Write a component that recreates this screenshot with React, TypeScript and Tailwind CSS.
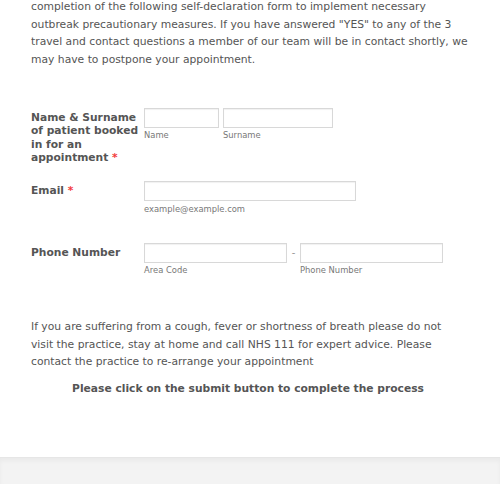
import React from "react";

const font = { fontFamily: '"DejaVu Sans", Verdana, sans-serif' };

function Input({ w }: { w: string }) {
  return (
    <div
      className={`${w} h-[20px] border border-[#d8d8d8] bg-white shadow-[inset_0_1px_1px_rgba(0,0,0,0.06)]`}
    />
  );
}

export default function App() {
  return (
    <div className="w-[500px] h-[484px] bg-white overflow-hidden flex flex-col" style={font}>
      <div className="flex-1 pl-[31px] pr-[24px]">
        <p className="-mt-[2px] text-[10.75px] leading-[17.5px] text-[#555]">
          completion of the following self-declaration form to implement necessary outbreak
          precautionary measures. If you have answered "YES" to any of the 3 travel and contact
          questions a member of our team will be in contact shortly, we may have to postpone your
          appointment.
        </p>

        <div className="mt-[40px] flex">
          <div className="w-[113px] shrink-0 pt-[3px] text-[10.7px] leading-[13.3px] font-bold text-[#555]">
            Name &amp; Surname of patient booked in for an appointment{" "}
            <span className="text-[#f23a3c]">*</span>
          </div>
          <div className="flex gap-[4px]">
            <div className="flex flex-col">
              <Input w="w-[75px]" />
              <span className="mt-[1px] text-[8.4px] leading-[12px] text-[#777]">Name</span>
            </div>
            <div className="flex flex-col">
              <Input w="w-[110px]" />
              <span className="mt-[1px] text-[8.4px] leading-[12px] text-[#777]">Surname</span>
            </div>
          </div>
        </div>

        <div className="mt-[17px] flex">
          <div className="w-[113px] shrink-0 pt-[3px] text-[10.7px] leading-[13.3px] font-bold text-[#555]">
            Email <span className="text-[#f23a3c]">*</span>
          </div>
          <div className="flex flex-col">
            <Input w="w-[212px]" />
            <span className="mt-[2px] text-[8.4px] leading-[12px] text-[#777]">
              example@example.com
            </span>
          </div>
        </div>

        <div className="mt-[28px] flex">
          <div className="w-[113px] shrink-0 pt-[3px] text-[10.7px] leading-[13.3px] font-bold text-[#555]">
            Phone Number
          </div>
          <div className="flex items-start">
            <div className="flex flex-col">
              <Input w="w-[143px]" />
              <span className="mt-[1px] text-[8.4px] leading-[12px] text-[#777]">Area Code</span>
            </div>
            <span className="w-[13px] text-center text-[10px] leading-[20px] text-[#999]">-</span>
            <div className="flex flex-col">
              <Input w="w-[143px]" />
              <span className="mt-[1px] text-[8.4px] leading-[12px] text-[#777]">Phone Number</span>
            </div>
          </div>
        </div>

        <p className="mt-[42px] mr-[20px] text-[10.75px] leading-[17.5px] text-[#555]">
          If you are suffering from a cough, fever or shortness of breath please do not visit the
          practice, stay at home and call NHS 111 for expert advice. Please contact the practice to
          re-arrange your appointment
        </p>

        <p className="mt-[9px] text-center pr-[11px] text-[10.7px] leading-[17.5px] font-bold text-[#555]">
          Please click on the submit button to complete the process
        </p>
      </div>
      <div className="h-[27px] bg-[#f3f3f3] border-t border-[#e6e6e6] shadow-[inset_0_3px_4px_rgba(0,0,0,0.04)]" />
    </div>
  );
}
